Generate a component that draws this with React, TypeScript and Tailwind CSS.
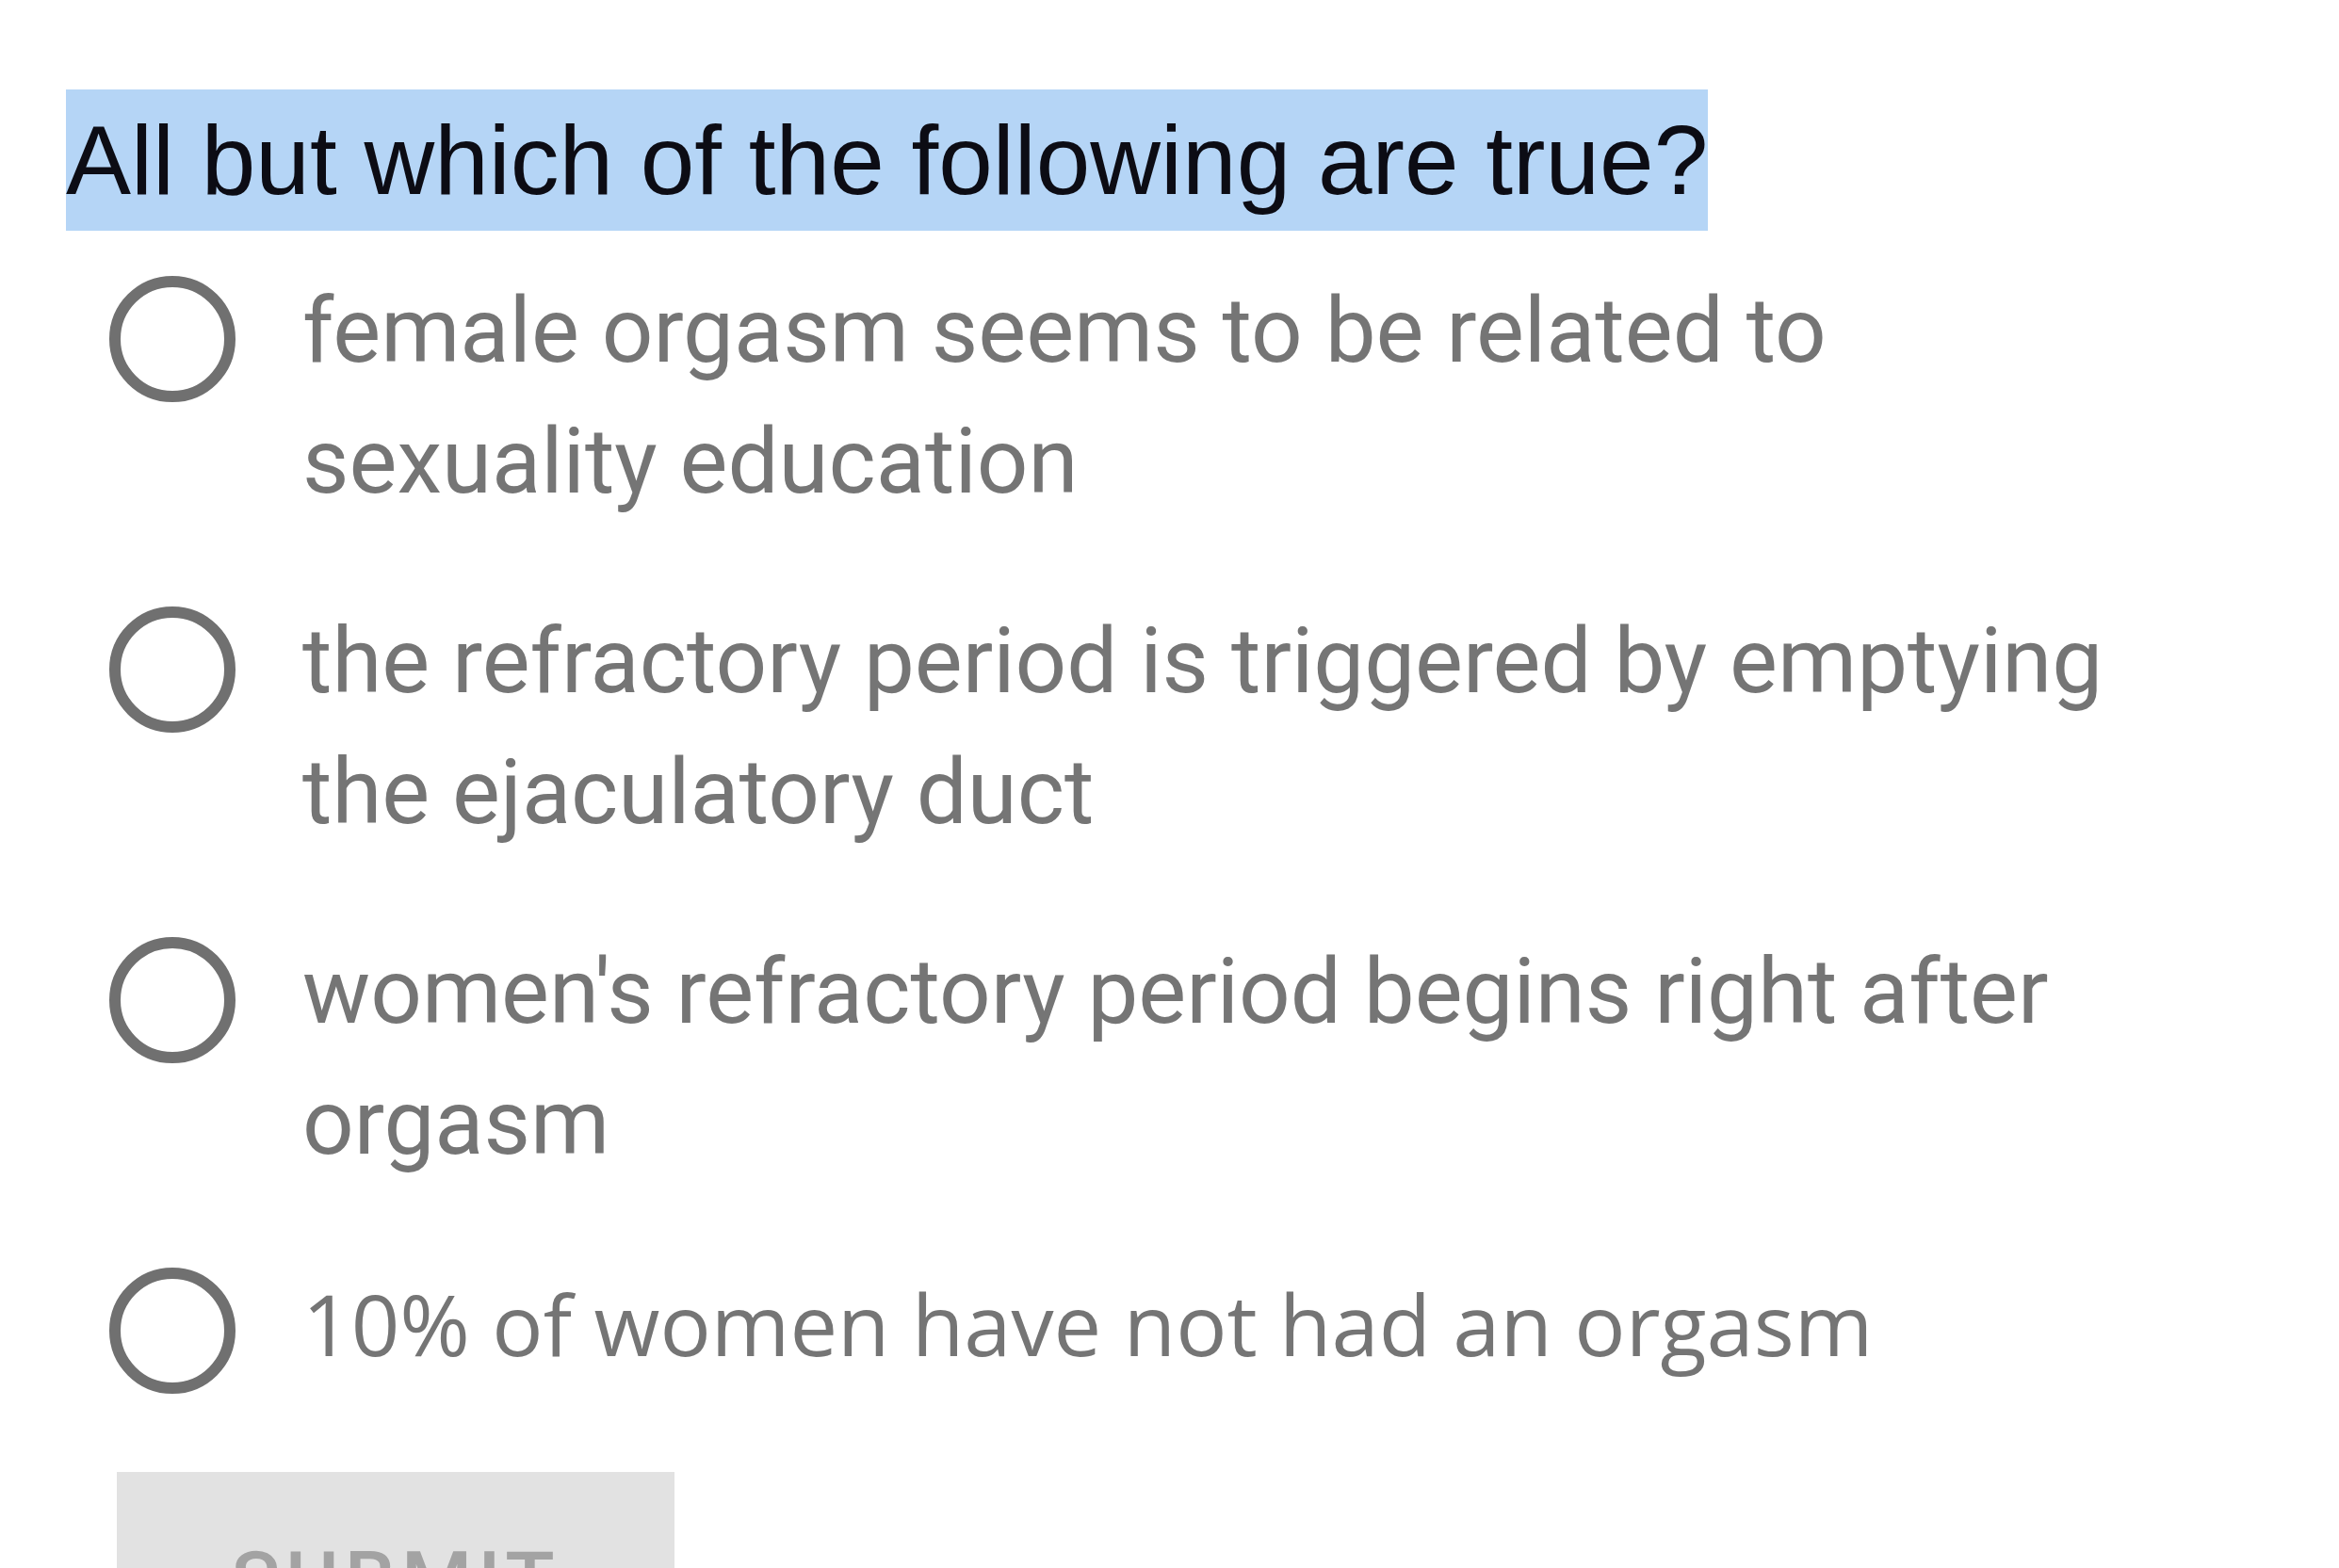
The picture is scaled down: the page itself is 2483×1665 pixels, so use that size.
import React from "react";

const options = [
  { text: "female orgasm seems to be related to sexuality education", font: "roboto" },
  { text: "the refractory period is triggered by emptying the ejaculatory duct", font: "roboto" },
  { text: "women's refractory period begins right after orgasm", font: "roboto" },
  { text: "10% of women have not had an orgasm", font: "open" },
];

function Radio() {
  return (
    <div className="mt-[11px] h-[134px] w-[134px] shrink-0 rounded-full border-[12px] border-[#707070] bg-white" />
  );
}

export default function App() {
  return (
    <div className="relative h-[1665px] w-[2483px] overflow-hidden bg-white">
      <div className="pl-[70px] pt-[95px]">
        <div
          className="inline-block bg-[#b5d5f6] text-[103.5px] leading-[150px] text-[#0c0c14]"
          style={{ fontFamily: '"Liberation Sans", Arial, sans-serif' }}
        >
          All but which of the following are true?
        </div>
      </div>
      <div className="mt-[37px] flex flex-col gap-[73px] pl-[116px]">
        {options.map((o, i) => (
          <div key={i} className="flex flex-row items-start gap-[71px]">
            <Radio />
            <div
              className={
                o.font === "open"
                  ? "w-[1990px] text-[90.3px] leading-[139px] text-[#757575]"
                  : "w-[1990px] text-[96px] leading-[139px] text-[#757575]"
              }
              style={{
                fontFamily:
                  o.font === "open"
                    ? '"Open Sans", "Noto Sans", sans-serif'
                    : 'Roboto, "Noto Sans", sans-serif',
              }}
            >
              {o.text}
            </div>
          </div>
        ))}
      </div>
      <div className="mt-[83px] pl-[124px]">
        <div
          className="flex h-[230px] w-[592px] items-start justify-center bg-[#e2e2e2] pt-[73px] text-[86px] leading-[86px] font-medium tracking-[6px] text-[#a3a3a3]"
          style={{ fontFamily: 'Roboto, "Noto Sans", sans-serif' }}
        >
          SUBMIT
        </div>
      </div>
    </div>
  );
}
